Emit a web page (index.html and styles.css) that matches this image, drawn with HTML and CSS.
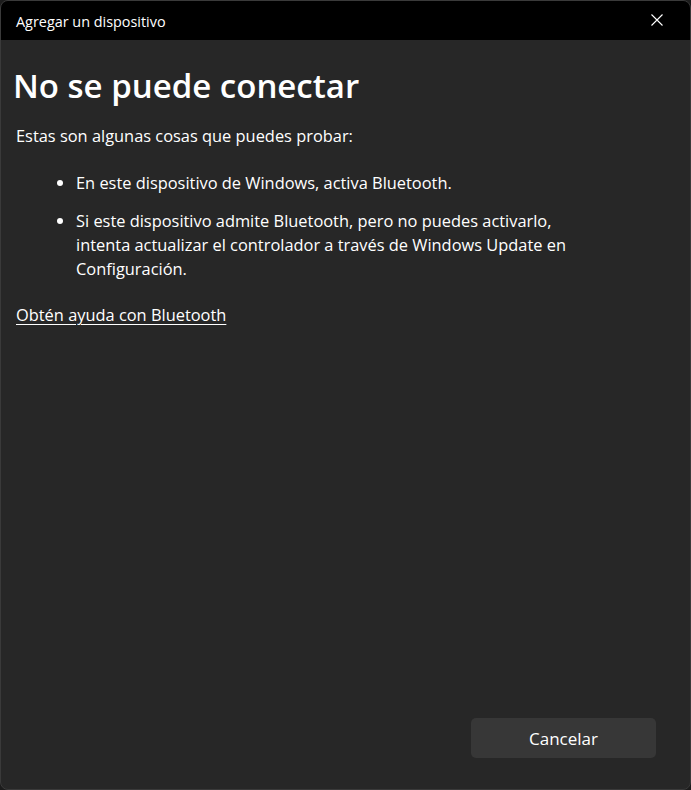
FILE: index.html
```html
<!DOCTYPE html>
<html lang="es">
<head>
<meta charset="utf-8">
<link rel="stylesheet" href="styles.css">
</head>
<body>
<div class="window">
  <div class="titlebar">
    <span class="title">Agregar un dispositivo</span>
    <span class="close">
      <svg width="12" height="12" viewBox="0 0 12 12"><path d="M0.5 0.5 L11.5 11.5 M11.5 0.5 L0.5 11.5" stroke="#fff" stroke-width="1.1" fill="none"/></svg>
    </span>
  </div>
  <div class="content">
    <h1 class="heading">No se puede conectar</h1>
    <p class="intro">Estas son algunas cosas que puedes probar:</p>
    <ul class="tips">
      <li>En este dispositivo de Windows, activa Bluetooth.</li>
      <li>Si este dispositivo admite Bluetooth, pero no puedes activarlo, intenta actualizar el controlador a través de Windows Update en Configuración.</li>
    </ul>
    <a class="help" href="#">Obtén ayuda con Bluetooth</a>
    <div class="spacer"></div>
    <div class="footer">
      <button class="btn">Cancelar</button>
    </div>
  </div>
</div>
</body>
</html>
```
FILE: styles.css
```css
html, body {
  margin: 0;
  padding: 0;
  background: #1c1c1c;
  height: 100%;
}
body {
  font-family: "Open Sans", "Noto Sans", sans-serif;
  color: #fff;
}
.window {
  box-sizing: border-box;
  width: 691px;
  height: 790px;
  border: 1px solid #3a3a3a;
  border-radius: 8px;
  overflow: hidden;
  display: flex;
  flex-direction: column;
  background: #272727;
}
.titlebar {
  box-sizing: border-box;
  height: 39px;
  background: #000;
  display: flex;
  align-items: center;
  justify-content: space-between;
  padding: 1px 27px 0 15px;
  flex: none;
}
.title {
  font-size: 14.4px;
  color: #fff;
}
.close {
  display: flex;
  align-items: center;
  margin-top: -2px;
}
.content {
  flex: 1;
  display: flex;
  flex-direction: column;
  padding: 0 34px 31px 15px;
}
.heading {
  margin: 26px 0 0 -3px;
  font-size: 33px;
  font-weight: 600;
  line-height: 40px;
}
.intro {
  margin: 18px 0 0 0;
  font-size: 16.4px;
  line-height: 24px;
}
.tips {
  margin: 23px 0 0 0;
  padding: 0 0 0 60px;
  font-size: 16.4px;
  line-height: 24px;
  max-width: 525px;
}
.tips li + li {
  margin-top: 14px;
}
.help {
  margin-top: 22px;
  align-self: flex-start;
  color: #fff;
  font-size: 16.4px;
  line-height: 24px;
  text-decoration: underline;
  text-underline-offset: 3px;
  text-decoration-thickness: 1px;
}
.spacer {
  flex: 1;
}
.footer {
  display: flex;
  justify-content: flex-end;
}
.btn {
  width: 185px;
  height: 40px;
  border: none;
  border-radius: 5px;
  background: #373737;
  color: #fff;
  font-family: "Open Sans", "Noto Sans", sans-serif;
  font-size: 17px;
}
```
